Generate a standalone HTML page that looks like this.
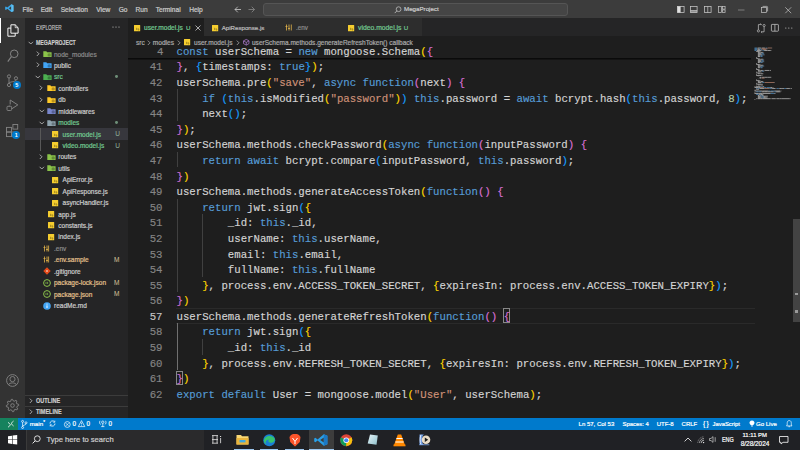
<!DOCTYPE html>
<html><head><meta charset="utf-8"><style>
*{box-sizing:border-box}
html,body{margin:0;padding:0}
body{width:800px;height:450px;overflow:hidden;position:relative;background:#1e1e1e;font-family:"Liberation Sans",sans-serif}
.a{position:absolute;white-space:nowrap}
.t{-webkit-text-stroke:0.2px currentColor}
.code{font-family:"Liberation Mono",monospace;font-size:10.69px;line-height:15.6px;color:#d4d4d4;white-space:pre;-webkit-text-stroke:0.15px currentColor}
.ln{font-family:"Liberation Mono",monospace;font-size:10.69px;line-height:15.6px;color:#858585;text-align:right;width:40px;white-space:pre;-webkit-text-stroke:0.15px currentColor}
.k{color:#569cd6}.s{color:#ce9178}.n{color:#b5cea8}
.b1{color:#ffd700}.b2{color:#da70d6}.b3{color:#179fff}
svg{position:absolute;overflow:visible}
</style></head><body>
<div class="a" style="left:0px;top:0px;width:800px;height:18px;background:#3c3c3c;"></div>
<div class="a" style="left:0px;top:18px;width:25px;height:400px;background:#333333;"></div>
<div class="a" style="left:25px;top:18px;width:102.5px;height:400px;background:#252526;"></div>
<div class="a" style="left:127.5px;top:18px;width:672.5px;height:18px;background:#252526;"></div>
<div class="a" style="left:0px;top:418px;width:800px;height:12px;background:#007acc;"></div>
<div class="a" style="left:0px;top:418px;width:18px;height:12px;background:#16825d;"></div>
<div class="a" style="left:0px;top:429.5px;width:800px;height:20.5px;background:#202125;"></div>
<svg style="left:4.8px;top:4.4px;" width="10" height="10" viewBox="0 0 10 10"><g transform="scale(0.88 0.84)"><path d="M7.2 0.4 L9.6 1.5 V8.5 L7.2 9.6 L2.6 5.8 L1 7 L0.2 6.5 V3.5 L1 3 L2.6 4.2 Z M7.2 2.8 L4.3 5 L7.2 7.2 Z" fill="#3aa7e8"/><path d="M7.2 0.4 L9.6 1.5 V8.5 L7.2 9.6 Z" fill="#5fc0f0"/></g></svg>
<div class="a t" style="left:22.5px;top:3.50px;height:12px;line-height:12px;font-size:6.6px;color:#cccccc;font-weight:normal;">File</div>
<div class="a t" style="left:40.7px;top:3.50px;height:12px;line-height:12px;font-size:6.6px;color:#cccccc;font-weight:normal;">Edit</div>
<div class="a t" style="left:60.7px;top:3.50px;height:12px;line-height:12px;font-size:6.6px;color:#cccccc;font-weight:normal;">Selection</div>
<div class="a t" style="left:96.2px;top:3.50px;height:12px;line-height:12px;font-size:6.6px;color:#cccccc;font-weight:normal;">View</div>
<div class="a t" style="left:118.7px;top:3.50px;height:12px;line-height:12px;font-size:6.6px;color:#cccccc;font-weight:normal;">Go</div>
<div class="a t" style="left:135.5px;top:3.50px;height:12px;line-height:12px;font-size:6.6px;color:#cccccc;font-weight:normal;">Run</div>
<div class="a t" style="left:155.7px;top:3.50px;height:12px;line-height:12px;font-size:6.6px;color:#cccccc;font-weight:normal;">Terminal</div>
<div class="a t" style="left:189.2px;top:3.50px;height:12px;line-height:12px;font-size:6.6px;color:#cccccc;font-weight:normal;">Help</div>
<svg style="left:234px;top:6px;" width="8" height="7" viewBox="0 0 8 7"><path d="M7 3.5 H1 M3.8 0.7 L1 3.5 L3.8 6.3" stroke="#cccccc" stroke-width="0.8" fill="none"/></svg>
<svg style="left:248px;top:6px;" width="8" height="7" viewBox="0 0 8 7"><path d="M0.5 3.5 H6.5 M3.7 0.7 L6.5 3.5 L3.7 6.3" stroke="#8a8a8a" stroke-width="0.8" fill="none"/></svg>
<div class="a" style="left:262.5px;top:3px;width:305px;height:12.5px;background:#454545;border-radius:3px;border:0.5px solid #555555"></div>
<svg style="left:394px;top:5.5px;" width="8" height="8" viewBox="0 0 8 8"><circle cx="4.6" cy="3.2" r="2.4" stroke="#bbbbbb" stroke-width="0.8" fill="none"/><path d="M2.9 4.9 L0.7 7.1" stroke="#bbbbbb" stroke-width="0.9"/></svg>
<div class="a t" style="left:404px;top:3.30px;height:12px;line-height:12px;font-size:6.2px;color:#cccccc;font-weight:normal;">MegaProject</div>
<svg style="left:677.3px;top:6.2px;" width="7.5" height="7" viewBox="0 0 7.5 7"><rect x="0.4" y="0.4" width="6.7" height="6.2" stroke="#c8c8c8" stroke-width="0.75" fill="none"/><rect x="0.4" y="0.4" width="3.2" height="6.2" fill="#e0e0e0"/></svg>
<svg style="left:690.3px;top:6.2px;" width="7.5" height="7" viewBox="0 0 7.5 7"><rect x="0.4" y="0.4" width="6.7" height="6.2" stroke="#c8c8c8" stroke-width="0.75" fill="none"/><rect x="0.4" y="4.5" width="6.7" height="2.1" fill="#c8c8c8" opacity="0.6"/><path d="M0.4 4.5 H7.1" stroke="#c8c8c8" stroke-width="0.7"/></svg>
<svg style="left:704px;top:6.2px;" width="7.5" height="7" viewBox="0 0 7.5 7"><rect x="0.4" y="0.4" width="6.7" height="6.2" stroke="#c8c8c8" stroke-width="0.75" fill="none"/><path d="M3.75 0.4 V6.6" stroke="#c8c8c8" stroke-width="0.7"/></svg>
<svg style="left:718px;top:6.2px;" width="7.5" height="7" viewBox="0 0 7.5 7"><rect x="0.4" y="0.4" width="3" height="6.2" stroke="#c8c8c8" stroke-width="0.7" fill="none"/><rect x="4.4" y="0.4" width="2.7" height="2.7" stroke="#c8c8c8" stroke-width="0.7" fill="none"/><rect x="4.4" y="3.9" width="2.7" height="2.7" stroke="#c8c8c8" stroke-width="0.7" fill="none"/></svg>
<svg style="left:737.5px;top:8.5px;" width="7" height="2" viewBox="0 0 7 2"><path d="M0 1 H6.5" stroke="#9a9a9a" stroke-width="0.7"/></svg>
<svg style="left:761px;top:6.3px;" width="7" height="7" viewBox="0 0 7 7"><rect x="0.4" y="1.4" width="5.2" height="5.2" stroke="#c8c8c8" stroke-width="0.7" fill="none"/><path d="M1.6 0.4 H5.8 Q6.6 0.4 6.6 1.2 V5.4" stroke="#c8c8c8" stroke-width="0.7" fill="none"/></svg>
<svg style="left:785px;top:6.5px;" width="6.5" height="6.5" viewBox="0 0 6.5 6.5"><path d="M0.3 0.3 L6.2 6.2 M6.2 0.3 L0.3 6.2" stroke="#c8c8c8" stroke-width="0.7"/></svg>
<div class="a" style="left:0px;top:18px;width:1.3px;height:25.3px;background:#ffffff;"></div>
<svg style="left:6.5px;top:24px;" width="12" height="13" viewBox="0 0 12 13"><path d="M3.9 0.8 H8.2 L11.1 3.7 V9.2 H3.9 Z" stroke="#ffffff" stroke-width="0.95" fill="none" stroke-linejoin="round"/><path d="M8.2 0.8 V3.7 H11.1" stroke="#ffffff" stroke-width="0.7" fill="none"/><path d="M3.9 4.1 H0.9 V12.2 H8.2 V9.2" stroke="#ffffff" stroke-width="0.95" fill="none" stroke-linejoin="round"/></svg>
<svg style="left:6.5px;top:49px;" width="12" height="14" viewBox="0 0 12 14"><circle cx="7.2" cy="4.8" r="3.8" stroke="#858585" stroke-width="1" fill="none"/><path d="M4.4 7.6 L0.8 12.6" stroke="#858585" stroke-width="1.1"/></svg>
<svg style="left:6px;top:74px;" width="14" height="14" viewBox="0 0 14 14"><circle cx="3" cy="2.4" r="1.6" stroke="#858585" stroke-width="0.9" fill="none"/><circle cx="3" cy="11" r="1.6" stroke="#858585" stroke-width="0.9" fill="none"/><circle cx="10" cy="4.3" r="1.6" stroke="#858585" stroke-width="0.9" fill="none"/><path d="M3 4 V9.4 M10 5.9 C10 8 3 7.5 3 9.4" stroke="#858585" stroke-width="0.9" fill="none"/></svg>
<div class="a" style="left:12.7px;top:80.6px;width:8.4px;height:8.4px;border-radius:50%;background:#007acc;color:#fff;font-size:5.5px;line-height:8px;text-align:center;font-weight:bold">5</div>
<svg style="left:6px;top:99px;" width="13" height="13" viewBox="0 0 13 13"><path d="M4.2 5.5 V1 L11.8 5.9 L5.8 9.8" stroke="#858585" stroke-width="0.95" fill="none" stroke-linejoin="round"/><rect x="1" y="7.3" width="4.6" height="4.2" rx="0.9" stroke="#858585" stroke-width="0.9" fill="#333333"/><path d="M3.3 6.5 V7.3" stroke="#858585" stroke-width="0.8"/></svg>
<svg style="left:6px;top:123.5px;" width="13" height="13.5" viewBox="0 0 13 13.5"><rect x="0.5" y="3.4" width="5" height="4.6" stroke="#858585" stroke-width="0.9" fill="none"/><rect x="0.5" y="8" width="5" height="4.6" stroke="#858585" stroke-width="0.9" fill="none"/><rect x="6.9" y="0.5" width="4.8" height="4.6" stroke="#858585" stroke-width="0.9" fill="none"/><rect x="5.5" y="8" width="4.6" height="4.6" stroke="#858585" stroke-width="0.9" fill="none"/></svg>
<div class="a" style="left:12.2px;top:130.6px;width:8px;height:8px;border-radius:50%;background:#007acc;color:#fff;font-size:5.5px;line-height:8px;text-align:center;font-weight:bold">1</div>
<svg style="left:6px;top:374px;" width="13" height="13" viewBox="0 0 13 13"><circle cx="6.5" cy="6.5" r="5.9" stroke="#858585" stroke-width="0.9" fill="none"/><circle cx="6.5" cy="5.1" r="2.6" stroke="#858585" stroke-width="0.9" fill="none"/><path d="M2.6 10.8 C3 8.3 10 8.3 10.4 10.8" stroke="#858585" stroke-width="0.9" fill="none"/></svg>
<svg style="left:6px;top:399px;" width="13" height="13" viewBox="0 0 13 13"><path d="M12.58 5.27 L12.70 6.48 L11.01 7.38 L10.76 8.24 L11.67 9.93 L10.90 10.87 L9.07 10.32 L8.28 10.74 L7.73 12.58 L6.52 12.70 L5.62 11.01 L4.76 10.76 L3.07 11.67 L2.13 10.90 L2.68 9.07 L2.26 8.28 L0.42 7.73 L0.30 6.52 L1.99 5.62 L2.24 4.76 L1.33 3.07 L2.10 2.13 L3.93 2.68 L4.72 2.26 L5.27 0.42 L6.48 0.30 L7.38 1.99 L8.24 2.24 L9.93 1.33 L10.87 2.10 L10.32 3.93 L10.74 4.72 Z" stroke="#858585" stroke-width="0.9" fill="none" stroke-linejoin="round"/><circle cx="6.5" cy="6.5" r="1.8" stroke="#858585" stroke-width="0.9" fill="none"/></svg>
<div class="a t" style="left:36px;top:21.80px;height:12px;line-height:12px;font-size:6.3px;color:#bbbbbb;font-weight:normal;transform:scaleX(0.75);transform-origin:0 50%">EXPLORER</div>
<svg style="left:111.5px;top:26.3px;" width="9" height="2" viewBox="0 0 9 2"><circle cx="1" cy="1" r="0.6" fill="#cccccc"/><circle cx="4" cy="1" r="0.6" fill="#cccccc"/><circle cx="7" cy="1" r="0.6" fill="#cccccc"/></svg>
<div class="a" style="left:25px;top:128.24px;width:102.5px;height:11.5px;background:#37373d;"></div>
<svg style="left:27.5px;top:40.5px;" width="6" height="4" viewBox="0 0 6 4"><path d="M0.6 0.8 L2.8 3 L5 0.8" stroke="#c5c5c5" stroke-width="0.8" fill="none"/></svg>
<div class="a t" style="left:36px;top:36.70px;height:12px;line-height:12px;font-size:6.7px;color:#cccccc;font-weight:bold;transform:scaleX(0.77);transform-origin:0 50%">MEGAPROJECT</div>
<svg style="left:35.7px;top:50.93px;" width="4" height="6" viewBox="0 0 4 6"><path d="M0.8 0.6 L3 2.8 L0.8 5" stroke="#c5c5c5" stroke-width="0.8" fill="none"/></svg>
<svg style="left:43.0px;top:50.93px;" width="9" height="6.5" viewBox="0 0 9 6.5"><path d="M0.3 0.3 H3.3 L4.2 1.2 H8.4 Q8.6 1.2 8.6 1.5 V5.9 H0.3 Z" fill="#8bc34a"/><circle cx="6.2" cy="3.9" r="1.7" fill="rgba(0,0,0,0.28)"/></svg>
<div class="a t" style="left:54.0px;top:48.53px;height:12px;line-height:12px;font-size:6.5px;color:#8b8b8b;font-weight:normal;">node_modules</div>
<svg style="left:35.7px;top:62.36px;" width="4" height="6" viewBox="0 0 4 6"><path d="M0.8 0.6 L3 2.8 L0.8 5" stroke="#c5c5c5" stroke-width="0.8" fill="none"/></svg>
<svg style="left:43.0px;top:62.36px;" width="9" height="6.5" viewBox="0 0 9 6.5"><path d="M0.3 0.3 H3.3 L4.2 1.2 H8.4 Q8.6 1.2 8.6 1.5 V5.9 H0.3 Z" fill="#42a5f5"/><circle cx="6.2" cy="3.9" r="1.7" fill="rgba(0,0,0,0.28)"/></svg>
<div class="a t" style="left:54.0px;top:59.96px;height:12px;line-height:12px;font-size:6.5px;color:#cccccc;font-weight:normal;">public</div>
<svg style="left:35.1px;top:74.78999999999999px;" width="6" height="4" viewBox="0 0 6 4"><path d="M0.6 0.8 L2.8 3 L5 0.8" stroke="#c5c5c5" stroke-width="0.8" fill="none"/></svg>
<svg style="left:43.0px;top:73.78999999999999px;" width="9" height="6.5" viewBox="0 0 9 6.5"><path d="M0.3 0.3 H3.3 L4.2 1.2 H8.4 Q8.6 1.2 8.6 1.5 V5.9 H0.3 Z" fill="#4caf50"/><circle cx="6.2" cy="3.9" r="1.7" fill="rgba(0,0,0,0.28)"/></svg>
<div class="a t" style="left:54.0px;top:71.39px;height:12px;line-height:12px;font-size:6.5px;color:#73c991;font-weight:normal;">src</div>
<div class="a" style="left:115px;top:75.49px;width:2.8px;height:2.8px;border-radius:50%;background:#6e8f78"></div>
<svg style="left:39.1px;top:85.22px;" width="4" height="6" viewBox="0 0 4 6"><path d="M0.8 0.6 L3 2.8 L0.8 5" stroke="#c5c5c5" stroke-width="0.8" fill="none"/></svg>
<svg style="left:47.3px;top:85.22px;" width="9" height="6.5" viewBox="0 0 9 6.5"><path d="M0.3 0.3 H3.3 L4.2 1.2 H8.4 Q8.6 1.2 8.6 1.5 V5.9 H0.3 Z" fill="#ffca28"/><circle cx="6.2" cy="3.9" r="1.7" fill="rgba(0,0,0,0.28)"/></svg>
<div class="a t" style="left:58.3px;top:82.82px;height:12px;line-height:12px;font-size:6.5px;color:#cccccc;font-weight:normal;">controllers</div>
<svg style="left:39.1px;top:96.65px;" width="4" height="6" viewBox="0 0 4 6"><path d="M0.8 0.6 L3 2.8 L0.8 5" stroke="#c5c5c5" stroke-width="0.8" fill="none"/></svg>
<svg style="left:47.3px;top:96.65px;" width="9" height="6.5" viewBox="0 0 9 6.5"><path d="M0.3 0.3 H3.3 L4.2 1.2 H8.4 Q8.6 1.2 8.6 1.5 V5.9 H0.3 Z" fill="#ffca28"/><circle cx="6.2" cy="3.9" r="1.7" fill="rgba(0,0,0,0.28)"/></svg>
<div class="a t" style="left:58.3px;top:94.25px;height:12px;line-height:12px;font-size:6.5px;color:#cccccc;font-weight:normal;">db</div>
<svg style="left:38.5px;top:109.08px;" width="6" height="4" viewBox="0 0 6 4"><path d="M0.6 0.8 L2.8 3 L5 0.8" stroke="#c5c5c5" stroke-width="0.8" fill="none"/></svg>
<svg style="left:47.3px;top:108.08px;" width="9" height="6.5" viewBox="0 0 9 6.5"><path d="M0.3 0.3 H3.3 L4.2 1.2 H8.4 Q8.6 1.2 8.6 1.5 V5.9 H0.3 Z" fill="#7986cb"/><circle cx="6.2" cy="3.9" r="1.7" fill="rgba(0,0,0,0.28)"/></svg>
<div class="a t" style="left:58.3px;top:105.68px;height:12px;line-height:12px;font-size:6.5px;color:#cccccc;font-weight:normal;">middlewares</div>
<svg style="left:38.5px;top:120.50999999999999px;" width="6" height="4" viewBox="0 0 6 4"><path d="M0.6 0.8 L2.8 3 L5 0.8" stroke="#c5c5c5" stroke-width="0.8" fill="none"/></svg>
<svg style="left:47.3px;top:119.50999999999999px;" width="9" height="6.5" viewBox="0 0 9 6.5"><path d="M0.3 0.3 H3.3 L4.2 1.2 H8.4 Q8.6 1.2 8.6 1.5 V5.9 H0.3 Z" fill="#90a4ae"/><circle cx="6.2" cy="3.9" r="1.7" fill="rgba(0,0,0,0.28)"/></svg>
<div class="a t" style="left:58.3px;top:117.11px;height:12px;line-height:12px;font-size:6.5px;color:#73c991;font-weight:normal;">modles</div>
<div class="a" style="left:115px;top:121.21px;width:2.8px;height:2.8px;border-radius:50%;background:#6e8f78"></div>
<svg style="left:52.4px;top:130.94px;" width="6.2" height="6.2" viewBox="0 0 6.2 6.2"><rect x="0" y="0" width="6.2" height="6.2" fill="#f5cd2f" rx="0.3"/><path d="M2.6 2.8 V5 M3.6 4.6 C4.3 5.3 5.3 5 5 4.3 C4.7 3.8 3.7 3.9 3.8 3.3" stroke="#5a4a10" stroke-width="0.5" fill="none"/></svg>
<div class="a t" style="left:62.6px;top:128.54px;height:12px;line-height:12px;font-size:6.5px;color:#73c991;font-weight:normal;">user.model.js</div>
<div class="a t" style="left:115.2px;top:128.44px;height:12px;line-height:12px;font-size:6.5px;color:#94b89e;font-weight:normal;-webkit-text-stroke:0">U</div>
<svg style="left:52.4px;top:142.37px;" width="6.2" height="6.2" viewBox="0 0 6.2 6.2"><rect x="0" y="0" width="6.2" height="6.2" fill="#f5cd2f" rx="0.3"/><path d="M2.6 2.8 V5 M3.6 4.6 C4.3 5.3 5.3 5 5 4.3 C4.7 3.8 3.7 3.9 3.8 3.3" stroke="#5a4a10" stroke-width="0.5" fill="none"/></svg>
<div class="a t" style="left:62.6px;top:139.97px;height:12px;line-height:12px;font-size:6.5px;color:#73c991;font-weight:normal;">video.model.js</div>
<div class="a t" style="left:115.2px;top:139.87px;height:12px;line-height:12px;font-size:6.5px;color:#94b89e;font-weight:normal;-webkit-text-stroke:0">U</div>
<svg style="left:39.1px;top:153.8px;" width="4" height="6" viewBox="0 0 4 6"><path d="M0.8 0.6 L3 2.8 L0.8 5" stroke="#c5c5c5" stroke-width="0.8" fill="none"/></svg>
<svg style="left:47.3px;top:153.8px;" width="9" height="6.5" viewBox="0 0 9 6.5"><path d="M0.3 0.3 H3.3 L4.2 1.2 H8.4 Q8.6 1.2 8.6 1.5 V5.9 H0.3 Z" fill="#8bc34a"/><circle cx="6.2" cy="3.9" r="1.7" fill="rgba(0,0,0,0.28)"/></svg>
<div class="a t" style="left:58.3px;top:151.40px;height:12px;line-height:12px;font-size:6.5px;color:#cccccc;font-weight:normal;">routes</div>
<svg style="left:38.5px;top:166.23px;" width="6" height="4" viewBox="0 0 6 4"><path d="M0.6 0.8 L2.8 3 L5 0.8" stroke="#c5c5c5" stroke-width="0.8" fill="none"/></svg>
<svg style="left:47.3px;top:165.23px;" width="9" height="6.5" viewBox="0 0 9 6.5"><path d="M0.3 0.3 H3.3 L4.2 1.2 H8.4 Q8.6 1.2 8.6 1.5 V5.9 H0.3 Z" fill="#8bc34a"/><circle cx="6.2" cy="3.9" r="1.7" fill="rgba(0,0,0,0.28)"/></svg>
<div class="a t" style="left:58.3px;top:162.83px;height:12px;line-height:12px;font-size:6.5px;color:#cccccc;font-weight:normal;">utils</div>
<svg style="left:52.4px;top:176.66px;" width="6.2" height="6.2" viewBox="0 0 6.2 6.2"><rect x="0" y="0" width="6.2" height="6.2" fill="#f5cd2f" rx="0.3"/><path d="M2.6 2.8 V5 M3.6 4.6 C4.3 5.3 5.3 5 5 4.3 C4.7 3.8 3.7 3.9 3.8 3.3" stroke="#5a4a10" stroke-width="0.5" fill="none"/></svg>
<div class="a t" style="left:62.6px;top:174.26px;height:12px;line-height:12px;font-size:6.5px;color:#cccccc;font-weight:normal;">ApiError.js</div>
<svg style="left:52.4px;top:188.09px;" width="6.2" height="6.2" viewBox="0 0 6.2 6.2"><rect x="0" y="0" width="6.2" height="6.2" fill="#f5cd2f" rx="0.3"/><path d="M2.6 2.8 V5 M3.6 4.6 C4.3 5.3 5.3 5 5 4.3 C4.7 3.8 3.7 3.9 3.8 3.3" stroke="#5a4a10" stroke-width="0.5" fill="none"/></svg>
<div class="a t" style="left:62.6px;top:185.69px;height:12px;line-height:12px;font-size:6.5px;color:#cccccc;font-weight:normal;">ApiResponse.js</div>
<svg style="left:52.4px;top:199.51999999999998px;" width="6.2" height="6.2" viewBox="0 0 6.2 6.2"><rect x="0" y="0" width="6.2" height="6.2" fill="#f5cd2f" rx="0.3"/><path d="M2.6 2.8 V5 M3.6 4.6 C4.3 5.3 5.3 5 5 4.3 C4.7 3.8 3.7 3.9 3.8 3.3" stroke="#5a4a10" stroke-width="0.5" fill="none"/></svg>
<div class="a t" style="left:62.6px;top:197.12px;height:12px;line-height:12px;font-size:6.5px;color:#cccccc;font-weight:normal;">asyncHandler.js</div>
<svg style="left:48.099999999999994px;top:210.95px;" width="6.2" height="6.2" viewBox="0 0 6.2 6.2"><rect x="0" y="0" width="6.2" height="6.2" fill="#f5cd2f" rx="0.3"/><path d="M2.6 2.8 V5 M3.6 4.6 C4.3 5.3 5.3 5 5 4.3 C4.7 3.8 3.7 3.9 3.8 3.3" stroke="#5a4a10" stroke-width="0.5" fill="none"/></svg>
<div class="a t" style="left:58.3px;top:208.55px;height:12px;line-height:12px;font-size:6.5px;color:#cccccc;font-weight:normal;">app.js</div>
<svg style="left:48.099999999999994px;top:222.38px;" width="6.2" height="6.2" viewBox="0 0 6.2 6.2"><rect x="0" y="0" width="6.2" height="6.2" fill="#f5cd2f" rx="0.3"/><path d="M2.6 2.8 V5 M3.6 4.6 C4.3 5.3 5.3 5 5 4.3 C4.7 3.8 3.7 3.9 3.8 3.3" stroke="#5a4a10" stroke-width="0.5" fill="none"/></svg>
<div class="a t" style="left:58.3px;top:219.98px;height:12px;line-height:12px;font-size:6.5px;color:#cccccc;font-weight:normal;">constants.js</div>
<svg style="left:48.099999999999994px;top:233.81px;" width="6.2" height="6.2" viewBox="0 0 6.2 6.2"><rect x="0" y="0" width="6.2" height="6.2" fill="#f5cd2f" rx="0.3"/><path d="M2.6 2.8 V5 M3.6 4.6 C4.3 5.3 5.3 5 5 4.3 C4.7 3.8 3.7 3.9 3.8 3.3" stroke="#5a4a10" stroke-width="0.5" fill="none"/></svg>
<div class="a t" style="left:58.3px;top:231.41px;height:12px;line-height:12px;font-size:6.5px;color:#cccccc;font-weight:normal;">index.js</div>
<svg style="left:43.0px;top:244.74px;" width="7" height="7" viewBox="0 0 7 7"><path d="M1.5 0.5 V6.5 M4 0.5 V6.5 M0.5 2.5 H2.5 M3 4.5 H5 M5.6 0.5 V6.5" stroke="#e2b44a" stroke-width="0.8"/></svg>
<div class="a t" style="left:54.0px;top:242.84px;height:12px;line-height:12px;font-size:6.5px;color:#8b8b8b;font-weight:normal;">.env</div>
<svg style="left:43.0px;top:256.16999999999996px;" width="7" height="7" viewBox="0 0 7 7"><path d="M1.5 0.5 V6.5 M4 0.5 V6.5 M0.5 2.5 H2.5 M3 4.5 H5 M5.6 0.5 V6.5" stroke="#e2b44a" stroke-width="0.8"/></svg>
<div class="a t" style="left:54.0px;top:254.27px;height:12px;line-height:12px;font-size:6.5px;color:#e2c08d;font-weight:normal;">.env.sample</div>
<div class="a t" style="left:113.9px;top:254.17px;height:12px;line-height:12px;font-size:6.5px;color:#d8c39a;font-weight:normal;-webkit-text-stroke:0">M</div>
<svg style="left:43.0px;top:267.3px;" width="8" height="8" viewBox="0 0 8 8"><rect x="1.4" y="1.4" width="5.2" height="5.2" transform="rotate(45 4 4)" fill="#e64a19"/><circle cx="4" cy="4" r="0.8" fill="#fff"/></svg>
<div class="a t" style="left:54.0px;top:265.70px;height:12px;line-height:12px;font-size:6.5px;color:#cccccc;font-weight:normal;">.gitignore</div>
<svg style="left:43.0px;top:278.72999999999996px;" width="8" height="8" viewBox="0 0 8 8"><circle cx="4" cy="4" r="3.4" stroke="#8bc34a" stroke-width="1" fill="none"/><path d="M3 2.8 V5 M4.6 2.8 V5" stroke="#8bc34a" stroke-width="0.7"/></svg>
<div class="a t" style="left:54.0px;top:277.13px;height:12px;line-height:12px;font-size:6.5px;color:#e2c08d;font-weight:normal;">package-lock.json</div>
<div class="a t" style="left:113.9px;top:277.03px;height:12px;line-height:12px;font-size:6.5px;color:#d8c39a;font-weight:normal;-webkit-text-stroke:0">M</div>
<svg style="left:43.0px;top:290.15999999999997px;" width="8" height="8" viewBox="0 0 8 8"><circle cx="4" cy="4" r="3.4" stroke="#8bc34a" stroke-width="1" fill="none"/><path d="M3 2.8 V5 M4.6 2.8 V5" stroke="#8bc34a" stroke-width="0.7"/></svg>
<div class="a t" style="left:54.0px;top:288.56px;height:12px;line-height:12px;font-size:6.5px;color:#e2c08d;font-weight:normal;">package.json</div>
<div class="a t" style="left:113.9px;top:288.46px;height:12px;line-height:12px;font-size:6.5px;color:#d8c39a;font-weight:normal;-webkit-text-stroke:0">M</div>
<svg style="left:43.0px;top:301.59px;" width="8" height="8" viewBox="0 0 8 8"><circle cx="4" cy="4" r="3.8" fill="#42a5f5"/><path d="M4 3.4 V6" stroke="#fff" stroke-width="1"/><circle cx="4" cy="2.1" r="0.55" fill="#fff"/></svg>
<div class="a t" style="left:54.0px;top:299.99px;height:12px;line-height:12px;font-size:6.5px;color:#cccccc;font-weight:normal;">readMe.md</div>
<div class="a" style="left:40px;top:128.24px;width:0.7px;height:23px;background:#585858;"></div>
<div class="a" style="left:25px;top:395px;width:102.5px;height:0.6px;background:#3c3c3c;"></div>
<div class="a" style="left:25px;top:406.3px;width:102.5px;height:0.6px;background:#3c3c3c;"></div>
<svg style="left:29px;top:398px;" width="4" height="6" viewBox="0 0 4 6"><path d="M0.8 0.6 L3 2.8 L0.8 5" stroke="#c5c5c5" stroke-width="0.8" fill="none"/></svg>
<div class="a t" style="left:35.7px;top:395.00px;height:12px;line-height:12px;font-size:6.3px;color:#cccccc;font-weight:bold;transform:scaleX(0.87);transform-origin:0 50%">OUTLINE</div>
<svg style="left:29px;top:409px;" width="4" height="6" viewBox="0 0 4 6"><path d="M0.8 0.6 L3 2.8 L0.8 5" stroke="#c5c5c5" stroke-width="0.8" fill="none"/></svg>
<div class="a t" style="left:35.7px;top:406.00px;height:12px;line-height:12px;font-size:6.3px;color:#cccccc;font-weight:bold;transform:scaleX(0.87);transform-origin:0 50%">TIMELINE</div>
<div class="a" style="left:127.5px;top:18px;width:76.8px;height:18px;background:#1e1e1e;"></div>
<div class="a" style="left:204.3px;top:18px;width:74px;height:18px;background:#2d2d2d;"></div>
<div class="a" style="left:278.3px;top:18px;width:63px;height:18px;background:#2d2d2d;"></div>
<div class="a" style="left:341.3px;top:18px;width:80.7px;height:18px;background:#2d2d2d;"></div>
<svg style="left:134px;top:24.5px;" width="6.2" height="6.2" viewBox="0 0 6.2 6.2"><rect x="0" y="0" width="6.2" height="6.2" fill="#f5cd2f" rx="0.3"/><path d="M2.6 2.8 V5 M3.6 4.6 C4.3 5.3 5.3 5 5 4.3 C4.7 3.8 3.7 3.9 3.8 3.3" stroke="#5a4a10" stroke-width="0.5" fill="none"/></svg>
<div class="a t" style="left:144px;top:21.80px;height:12px;line-height:12px;font-size:6.6px;color:#73c991;font-weight:normal;">user.model.js</div>
<div class="a t" style="left:186px;top:21.80px;height:12px;line-height:12px;font-size:6.2px;color:#73c991;font-weight:normal;">U</div>
<svg style="left:194.5px;top:24.5px;" width="6" height="6" viewBox="0 0 6 6"><path d="M0.5 0.5 L5.5 5.5 M5.5 0.5 L0.5 5.5" stroke="#cccccc" stroke-width="0.8"/></svg>
<svg style="left:211.5px;top:24.5px;" width="6.2" height="6.2" viewBox="0 0 6.2 6.2"><rect x="0" y="0" width="6.2" height="6.2" fill="#f5cd2f" rx="0.3"/><path d="M2.6 2.8 V5 M3.6 4.6 C4.3 5.3 5.3 5 5 4.3 C4.7 3.8 3.7 3.9 3.8 3.3" stroke="#5a4a10" stroke-width="0.5" fill="none"/></svg>
<div class="a t" style="left:221.7px;top:21.80px;height:12px;line-height:12px;font-size:6.15px;color:#bdbdbd;font-weight:normal;">ApiResponse.js</div>
<svg style="left:284.5px;top:24px;" width="8" height="7" viewBox="0 0 8 7"><path d="M1.5 0.5 V6.5 M4 0.5 V6.5 M0.5 2.5 H2.5 M3 4.5 H5 M6.3 0.5 V6.5" stroke="#e2b44a" stroke-width="0.8"/></svg>
<div class="a t" style="left:296px;top:21.80px;height:12px;line-height:12px;font-size:6.3px;color:#8b8b8b;font-weight:normal;">.env</div>
<svg style="left:348px;top:24.5px;" width="6.2" height="6.2" viewBox="0 0 6.2 6.2"><rect x="0" y="0" width="6.2" height="6.2" fill="#f5cd2f" rx="0.3"/><path d="M2.6 2.8 V5 M3.6 4.6 C4.3 5.3 5.3 5 5 4.3 C4.7 3.8 3.7 3.9 3.8 3.3" stroke="#5a4a10" stroke-width="0.5" fill="none"/></svg>
<div class="a t" style="left:358px;top:21.80px;height:12px;line-height:12px;font-size:6.8px;color:#73c991;font-weight:normal;">video.model.js</div>
<div class="a t" style="left:403.7px;top:21.80px;height:12px;line-height:12px;font-size:6.2px;color:#73c991;font-weight:normal;">U</div>
<svg style="left:757px;top:23.6px;" width="8.5" height="8.5" viewBox="0 0 8.5 8.5"><path d="M1.4 0.6 V5.8 M7.1 2.6 V7.8 M1.4 0.6 H4.5 M4.5 0.6 L3.3 -0.4 M7.1 7.8 H4 M4 7.8 L5.2 8.8" stroke="#c8c8c8" stroke-width="0.7" fill="none"/><circle cx="1.4" cy="6.9" r="1.1" stroke="#c8c8c8" stroke-width="0.65" fill="none"/><circle cx="7.1" cy="1.5" r="1.1" stroke="#c8c8c8" stroke-width="0.65" fill="none"/></svg>
<svg style="left:771px;top:23.6px;" width="7.8" height="7.6" viewBox="0 0 7.8 7.6"><rect x="0.4" y="0.4" width="7" height="6.8" rx="0.6" stroke="#c8c8c8" stroke-width="0.75" fill="none"/><path d="M3.9 0.4 V7.2" stroke="#c8c8c8" stroke-width="0.75"/></svg>
<svg style="left:784.5px;top:26.6px;" width="8" height="2" viewBox="0 0 8 2"><circle cx="0.8" cy="1" r="0.6" fill="#c8c8c8"/><circle cx="3.8" cy="1" r="0.6" fill="#c8c8c8"/><circle cx="6.8" cy="1" r="0.6" fill="#c8c8c8"/></svg>
<div class="a t" style="left:136px;top:36.60px;height:12px;line-height:12px;font-size:6.5px;color:#a9a9a9;font-weight:normal;">src</div>
<svg style="left:147px;top:39.6px;" width="4" height="6" viewBox="0 0 4 6"><path d="M0.8 0.6 L3 2.8 L0.8 5" stroke="#a9a9a9" stroke-width="0.8" fill="none"/></svg>
<div class="a t" style="left:152.8px;top:36.60px;height:12px;line-height:12px;font-size:6.6px;color:#a9a9a9;font-weight:normal;">modles</div>
<svg style="left:177px;top:39.6px;" width="4" height="6" viewBox="0 0 4 6"><path d="M0.8 0.6 L3 2.8 L0.8 5" stroke="#a9a9a9" stroke-width="0.8" fill="none"/></svg>
<svg style="left:184px;top:39px;" width="6.2" height="6.2" viewBox="0 0 6.2 6.2"><rect x="0" y="0" width="6.2" height="6.2" fill="#f5cd2f" rx="0.3"/><path d="M2.6 2.8 V5 M3.6 4.6 C4.3 5.3 5.3 5 5 4.3 C4.7 3.8 3.7 3.9 3.8 3.3" stroke="#5a4a10" stroke-width="0.5" fill="none"/></svg>
<div class="a t" style="left:194px;top:36.60px;height:12px;line-height:12px;font-size:6.55px;color:#a9a9a9;font-weight:normal;">user.model.js</div>
<svg style="left:236px;top:39.6px;" width="4" height="6" viewBox="0 0 4 6"><path d="M0.8 0.6 L3 2.8 L0.8 5" stroke="#a9a9a9" stroke-width="0.8" fill="none"/></svg>
<svg style="left:243px;top:39.3px;" width="6.5" height="6.5" viewBox="0 0 6.5 6.5"><path d="M3.25 0.4 L6 1.9 V4.6 L3.25 6.1 L0.5 4.6 V1.9 Z M0.5 1.9 L3.25 3.4 L6 1.9 M3.25 3.4 V6.1" stroke="#b180d7" stroke-width="0.7" fill="none"/></svg>
<div class="a t" style="left:252px;top:36.60px;height:12px;line-height:12px;font-size:6.52px;color:#a9a9a9;font-weight:normal;">userSchema.methods.generateRefreshToken() callback</div>
<div class="a" style="left:176px;top:307.8px;width:579px;height:16.6px;background:transparent;border-top:0.8px solid #2a2a2a;border-bottom:0.8px solid #2a2a2a"></div>
<div class="a" style="left:176.5px;top:89.4px;width:0.8px;height:31.2px;background:#404040;"></div>
<div class="a" style="left:176.5px;top:151.8px;width:0.8px;height:15.6px;background:#404040;"></div>
<div class="a" style="left:176.5px;top:198.60000000000002px;width:0.8px;height:93.6px;background:#404040;"></div>
<div class="a" style="left:202.0px;top:214.2px;width:0.8px;height:62.4px;background:#404040;"></div>
<div class="a" style="left:176.5px;top:323.4px;width:0.8px;height:46.8px;background:#707070;"></div>
<div class="a" style="left:202.0px;top:339.0px;width:0.8px;height:15.6px;background:#404040;"></div>
<div class="a" style="left:176.0px;top:370.7px;width:7.413px;height:14.6px;background:transparent;border:0.7px solid #888888"></div>
<div class="a" style="left:503.063px;top:308.3px;width:7.413px;height:14.6px;background:transparent;border:0.7px solid #888888"></div>
<div class="a ln" style="left:122.5px;top:60.400000000000006px">41
42
43
44
45
46
47
48
49
50
51
52
53
54
55
56
<span style="color:#c6c6c6">57</span>
58
59
60
61
62</div>
<div class="a code" style="left:176.5px;top:60.400000000000006px"><span class="b2">}</span>, <span class="b3">{</span>timestamps: <span class="k">true</span><span class="b3">}</span><span class="b1">)</span>;
userSchema.pre<span class="b1">(</span><span class="s">"save"</span>, <span class="k">async</span> <span class="k">function</span><span class="b2">(</span>next<span class="b2">)</span> <span class="b2">{</span>
    <span class="k">if</span> <span class="b3">(</span><span class="k">this</span>.isModified<span class="b1">(</span><span class="s">"password"</span><span class="b1">)</span><span class="b3">)</span> <span class="k">this</span>.password = <span class="k">await</span> bcrypt.hash<span class="b3">(</span><span class="k">this</span>.password, <span class="n">8</span><span class="b3">)</span>;
    next<span class="b3">()</span>;
<span class="b2">}</span><span class="b1">)</span>;
userSchema.methods.checkPassword<span class="b1">(</span><span class="k">async</span> <span class="k">function</span><span class="b2">(</span>inputPassword<span class="b2">)</span> <span class="b2">{</span>
    <span class="k">return</span> <span class="k">await</span> bcrypt.compare<span class="b3">(</span>inputPassword, <span class="k">this</span>.password<span class="b3">)</span>;
<span class="b2">}</span><span class="b1">)</span>
userSchema.methods.generateAccessToken<span class="b1">(</span><span class="k">function</span><span class="b2">()</span> <span class="b2">{</span>
    <span class="k">return</span> jwt.sign<span class="b3">(</span><span class="b1">{</span>
        _id: <span class="k">this</span>._id,
        userName: <span class="k">this</span>.userName,
        email: <span class="k">this</span>.email,
        fullName: <span class="k">this</span>.fullName
    <span class="b1">}</span>, process.env.ACCESS_TOKEN_SECRET, <span class="b1">{</span>expiresIn: process.env.ACCESS_TOKEN_EXPIRY<span class="b1">}</span><span class="b3">)</span>;
<span class="b2">}</span><span class="b1">)</span>
userSchema.methods.generateRefreshToken<span class="b1">(</span><span class="k">function</span><span class="b2">()</span> <span class="b2">{</span>
    <span class="k">return</span> jwt.sign<span class="b3">(</span><span class="b1">{</span>
        _id: <span class="k">this</span>._id
    <span class="b1">}</span>, process.env.REFRESH_TOKEN_SECRET, <span class="b1">{</span>expiresIn: process.env.REFRESH_TOKEN_EXPIRY<span class="b1">}</span><span class="b3">)</span>;
<span class="b2">}</span><span class="b1">)</span>
<span class="k">export</span> <span class="k">default</span> User = mongoose.model<span class="b1">(</span><span class="s">"User"</span>, userSchema<span class="b1">)</span>;</div>
<div class="a ln" style="left:123.5px;top:45.1px">4</div>
<div class="a code" style="left:176.5px;top:45.1px"><span class="k">const</span> userSchema = <span class="k">new</span> mongoose.Schema<span class="b1">(</span><span class="b2">{</span></div>
<div class="a" style="left:127.5px;top:57.5px;width:623px;height:1.2px;background:#0a0a0a;"></div>
<div class="a" style="left:127.5px;top:58.7px;width:623px;height:1.2px;background:rgba(0,0,0,0.35);"></div>
<svg style="left:0;top:0" width="800" height="450"><rect x="754.50" y="47.60" width="2.52" height="0.8" fill="#569cd6" opacity="0.8"/><rect x="757.44" y="47.60" width="3.36" height="0.8" fill="#d4d4d4" opacity="0.8"/><rect x="760.80" y="47.60" width="0.42" height="0.8" fill="#c0c0c0" opacity="0.8"/><rect x="761.64" y="47.60" width="0.42" height="0.8" fill="#c0c0c0" opacity="0.8"/><rect x="762.06" y="47.60" width="2.52" height="0.8" fill="#d4d4d4" opacity="0.8"/><rect x="764.58" y="47.60" width="0.42" height="0.8" fill="#c0c0c0" opacity="0.8"/><rect x="765.42" y="47.60" width="1.68" height="0.8" fill="#569cd6" opacity="0.8"/><rect x="767.52" y="47.60" width="4.20" height="0.8" fill="#ce9178" opacity="0.8"/><rect x="771.72" y="47.60" width="0.42" height="0.8" fill="#c0c0c0" opacity="0.8"/><rect x="754.50" y="48.46" width="2.52" height="0.8" fill="#569cd6" opacity="0.8"/><rect x="757.44" y="48.46" width="1.26" height="0.8" fill="#d4d4d4" opacity="0.8"/><rect x="759.12" y="48.46" width="1.68" height="0.8" fill="#569cd6" opacity="0.8"/><rect x="761.22" y="48.46" width="5.88" height="0.8" fill="#ce9178" opacity="0.8"/><rect x="767.10" y="48.46" width="0.42" height="0.8" fill="#c0c0c0" opacity="0.8"/><rect x="754.50" y="49.32" width="2.52" height="0.8" fill="#569cd6" opacity="0.8"/><rect x="757.44" y="49.32" width="2.52" height="0.8" fill="#d4d4d4" opacity="0.8"/><rect x="760.38" y="49.32" width="1.68" height="0.8" fill="#569cd6" opacity="0.8"/><rect x="762.48" y="49.32" width="3.36" height="0.8" fill="#ce9178" opacity="0.8"/><rect x="765.84" y="49.32" width="0.42" height="0.8" fill="#c0c0c0" opacity="0.8"/><rect x="754.50" y="50.18" width="2.10" height="0.8" fill="#569cd6" opacity="0.8"/><rect x="757.02" y="50.18" width="4.20" height="0.8" fill="#d4d4d4" opacity="0.8"/><rect x="761.64" y="50.18" width="0.42" height="0.8" fill="#c0c0c0" opacity="0.8"/><rect x="762.48" y="50.18" width="1.26" height="0.8" fill="#569cd6" opacity="0.8"/><rect x="764.16" y="50.18" width="3.36" height="0.8" fill="#d4d4d4" opacity="0.8"/><rect x="767.52" y="50.18" width="0.42" height="0.8" fill="#c0c0c0" opacity="0.8"/><rect x="767.94" y="50.18" width="2.52" height="0.8" fill="#d4d4d4" opacity="0.8"/><rect x="770.46" y="50.18" width="0.84" height="0.8" fill="#c0c0c0" opacity="0.8"/><rect x="756.18" y="51.04" width="3.36" height="0.8" fill="#d4d4d4" opacity="0.8"/><rect x="759.54" y="51.04" width="0.42" height="0.8" fill="#c0c0c0" opacity="0.8"/><rect x="760.38" y="51.04" width="0.42" height="0.8" fill="#c0c0c0" opacity="0.8"/><rect x="757.86" y="51.90" width="1.68" height="0.8" fill="#d4d4d4" opacity="0.8"/><rect x="759.54" y="51.90" width="0.42" height="0.8" fill="#c0c0c0" opacity="0.8"/><rect x="760.38" y="51.90" width="2.52" height="0.8" fill="#d4d4d4" opacity="0.8"/><rect x="762.90" y="51.90" width="0.42" height="0.8" fill="#c0c0c0" opacity="0.8"/><rect x="757.86" y="52.76" width="3.36" height="0.8" fill="#d4d4d4" opacity="0.8"/><rect x="761.22" y="52.76" width="0.42" height="0.8" fill="#c0c0c0" opacity="0.8"/><rect x="762.06" y="52.76" width="1.68" height="0.8" fill="#569cd6" opacity="0.8"/><rect x="763.74" y="52.76" width="0.42" height="0.8" fill="#c0c0c0" opacity="0.8"/><rect x="757.86" y="53.62" width="2.52" height="0.8" fill="#d4d4d4" opacity="0.8"/><rect x="760.38" y="53.62" width="0.42" height="0.8" fill="#c0c0c0" opacity="0.8"/><rect x="761.22" y="53.62" width="1.68" height="0.8" fill="#569cd6" opacity="0.8"/><rect x="762.90" y="53.62" width="0.42" height="0.8" fill="#c0c0c0" opacity="0.8"/><rect x="757.86" y="54.48" width="3.78" height="0.8" fill="#d4d4d4" opacity="0.8"/><rect x="761.64" y="54.48" width="0.42" height="0.8" fill="#c0c0c0" opacity="0.8"/><rect x="762.48" y="54.48" width="1.68" height="0.8" fill="#569cd6" opacity="0.8"/><rect x="764.16" y="54.48" width="0.42" height="0.8" fill="#c0c0c0" opacity="0.8"/><rect x="757.86" y="55.34" width="1.68" height="0.8" fill="#d4d4d4" opacity="0.8"/><rect x="759.54" y="55.34" width="0.42" height="0.8" fill="#c0c0c0" opacity="0.8"/><rect x="760.38" y="55.34" width="1.68" height="0.8" fill="#569cd6" opacity="0.8"/><rect x="762.06" y="55.34" width="0.42" height="0.8" fill="#c0c0c0" opacity="0.8"/><rect x="757.86" y="56.20" width="2.10" height="0.8" fill="#d4d4d4" opacity="0.8"/><rect x="759.96" y="56.20" width="0.42" height="0.8" fill="#c0c0c0" opacity="0.8"/><rect x="760.80" y="56.20" width="1.68" height="0.8" fill="#569cd6" opacity="0.8"/><rect x="756.18" y="57.06" width="0.84" height="0.8" fill="#c0c0c0" opacity="0.8"/><rect x="756.18" y="57.92" width="2.10" height="0.8" fill="#d4d4d4" opacity="0.8"/><rect x="758.28" y="57.92" width="0.42" height="0.8" fill="#c0c0c0" opacity="0.8"/><rect x="759.12" y="57.92" width="0.42" height="0.8" fill="#c0c0c0" opacity="0.8"/><rect x="757.86" y="58.78" width="1.68" height="0.8" fill="#d4d4d4" opacity="0.8"/><rect x="759.54" y="58.78" width="0.42" height="0.8" fill="#c0c0c0" opacity="0.8"/><rect x="760.38" y="58.78" width="2.52" height="0.8" fill="#d4d4d4" opacity="0.8"/><rect x="762.90" y="58.78" width="0.42" height="0.8" fill="#c0c0c0" opacity="0.8"/><rect x="757.86" y="59.64" width="3.36" height="0.8" fill="#d4d4d4" opacity="0.8"/><rect x="761.22" y="59.64" width="0.42" height="0.8" fill="#c0c0c0" opacity="0.8"/><rect x="762.06" y="59.64" width="1.68" height="0.8" fill="#569cd6" opacity="0.8"/><rect x="763.74" y="59.64" width="0.42" height="0.8" fill="#c0c0c0" opacity="0.8"/><rect x="757.86" y="60.50" width="2.52" height="0.8" fill="#d4d4d4" opacity="0.8"/><rect x="760.38" y="60.50" width="0.42" height="0.8" fill="#c0c0c0" opacity="0.8"/><rect x="761.22" y="60.50" width="1.68" height="0.8" fill="#569cd6" opacity="0.8"/><rect x="762.90" y="60.50" width="0.42" height="0.8" fill="#c0c0c0" opacity="0.8"/><rect x="757.86" y="61.36" width="3.36" height="0.8" fill="#d4d4d4" opacity="0.8"/><rect x="761.22" y="61.36" width="0.42" height="0.8" fill="#c0c0c0" opacity="0.8"/><rect x="762.06" y="61.36" width="1.68" height="0.8" fill="#569cd6" opacity="0.8"/><rect x="763.74" y="61.36" width="0.42" height="0.8" fill="#c0c0c0" opacity="0.8"/><rect x="757.86" y="62.22" width="1.68" height="0.8" fill="#d4d4d4" opacity="0.8"/><rect x="759.54" y="62.22" width="0.42" height="0.8" fill="#c0c0c0" opacity="0.8"/><rect x="760.38" y="62.22" width="1.68" height="0.8" fill="#569cd6" opacity="0.8"/><rect x="762.06" y="62.22" width="0.42" height="0.8" fill="#c0c0c0" opacity="0.8"/><rect x="756.18" y="63.08" width="0.84" height="0.8" fill="#c0c0c0" opacity="0.8"/><rect x="756.18" y="63.94" width="3.36" height="0.8" fill="#d4d4d4" opacity="0.8"/><rect x="759.54" y="63.94" width="0.42" height="0.8" fill="#c0c0c0" opacity="0.8"/><rect x="760.38" y="63.94" width="0.42" height="0.8" fill="#c0c0c0" opacity="0.8"/><rect x="757.86" y="64.80" width="1.68" height="0.8" fill="#d4d4d4" opacity="0.8"/><rect x="759.54" y="64.80" width="0.42" height="0.8" fill="#c0c0c0" opacity="0.8"/><rect x="760.38" y="64.80" width="2.52" height="0.8" fill="#d4d4d4" opacity="0.8"/><rect x="762.90" y="64.80" width="0.42" height="0.8" fill="#c0c0c0" opacity="0.8"/><rect x="757.86" y="65.66" width="3.36" height="0.8" fill="#d4d4d4" opacity="0.8"/><rect x="761.22" y="65.66" width="0.42" height="0.8" fill="#c0c0c0" opacity="0.8"/><rect x="762.06" y="65.66" width="1.68" height="0.8" fill="#569cd6" opacity="0.8"/><rect x="763.74" y="65.66" width="0.42" height="0.8" fill="#c0c0c0" opacity="0.8"/><rect x="757.86" y="66.52" width="1.68" height="0.8" fill="#d4d4d4" opacity="0.8"/><rect x="759.54" y="66.52" width="0.42" height="0.8" fill="#c0c0c0" opacity="0.8"/><rect x="760.38" y="66.52" width="1.68" height="0.8" fill="#569cd6" opacity="0.8"/><rect x="762.06" y="66.52" width="0.42" height="0.8" fill="#c0c0c0" opacity="0.8"/><rect x="757.86" y="67.38" width="2.10" height="0.8" fill="#d4d4d4" opacity="0.8"/><rect x="759.96" y="67.38" width="0.42" height="0.8" fill="#c0c0c0" opacity="0.8"/><rect x="760.80" y="67.38" width="1.68" height="0.8" fill="#569cd6" opacity="0.8"/><rect x="756.18" y="68.24" width="0.84" height="0.8" fill="#c0c0c0" opacity="0.8"/><rect x="756.18" y="69.10" width="2.52" height="0.8" fill="#d4d4d4" opacity="0.8"/><rect x="758.70" y="69.10" width="0.42" height="0.8" fill="#c0c0c0" opacity="0.8"/><rect x="759.54" y="69.10" width="0.42" height="0.8" fill="#c0c0c0" opacity="0.8"/><rect x="757.86" y="69.96" width="1.68" height="0.8" fill="#d4d4d4" opacity="0.8"/><rect x="759.54" y="69.96" width="0.42" height="0.8" fill="#c0c0c0" opacity="0.8"/><rect x="760.38" y="69.96" width="2.52" height="0.8" fill="#d4d4d4" opacity="0.8"/><rect x="762.90" y="69.96" width="0.42" height="0.8" fill="#c0c0c0" opacity="0.8"/><rect x="763.74" y="69.96" width="0.84" height="0.8" fill="#c0c0c0" opacity="0.8"/><rect x="765.00" y="69.96" width="4.20" height="0.8" fill="#d4d4d4" opacity="0.8"/><rect x="769.62" y="69.96" width="1.26" height="0.8" fill="#d4d4d4" opacity="0.8"/><rect x="757.86" y="70.82" width="3.36" height="0.8" fill="#d4d4d4" opacity="0.8"/><rect x="761.22" y="70.82" width="0.42" height="0.8" fill="#c0c0c0" opacity="0.8"/><rect x="762.06" y="70.82" width="1.68" height="0.8" fill="#569cd6" opacity="0.8"/><rect x="763.74" y="70.82" width="0.42" height="0.8" fill="#c0c0c0" opacity="0.8"/><rect x="756.18" y="71.68" width="0.84" height="0.8" fill="#c0c0c0" opacity="0.8"/><rect x="756.18" y="72.54" width="4.20" height="0.8" fill="#d4d4d4" opacity="0.8"/><rect x="760.38" y="72.54" width="0.42" height="0.8" fill="#c0c0c0" opacity="0.8"/><rect x="761.22" y="72.54" width="0.42" height="0.8" fill="#c0c0c0" opacity="0.8"/><rect x="757.86" y="73.40" width="1.68" height="0.8" fill="#d4d4d4" opacity="0.8"/><rect x="759.54" y="73.40" width="0.42" height="0.8" fill="#c0c0c0" opacity="0.8"/><rect x="760.38" y="73.40" width="2.52" height="0.8" fill="#d4d4d4" opacity="0.8"/><rect x="762.90" y="73.40" width="0.42" height="0.8" fill="#c0c0c0" opacity="0.8"/><rect x="756.18" y="74.26" width="0.84" height="0.8" fill="#c0c0c0" opacity="0.8"/><rect x="756.18" y="75.12" width="5.04" height="0.8" fill="#d4d4d4" opacity="0.8"/><rect x="761.22" y="75.12" width="0.42" height="0.8" fill="#c0c0c0" opacity="0.8"/><rect x="762.06" y="75.12" width="0.42" height="0.8" fill="#c0c0c0" opacity="0.8"/><rect x="757.86" y="75.98" width="0.42" height="0.8" fill="#c0c0c0" opacity="0.8"/><rect x="759.54" y="76.84" width="1.68" height="0.8" fill="#d4d4d4" opacity="0.8"/><rect x="761.22" y="76.84" width="0.42" height="0.8" fill="#c0c0c0" opacity="0.8"/><rect x="762.06" y="76.84" width="2.52" height="0.8" fill="#d4d4d4" opacity="0.8"/><rect x="764.58" y="76.84" width="0.42" height="0.8" fill="#c0c0c0" opacity="0.8"/><rect x="765.00" y="76.84" width="2.10" height="0.8" fill="#d4d4d4" opacity="0.8"/><rect x="767.10" y="76.84" width="0.42" height="0.8" fill="#c0c0c0" opacity="0.8"/><rect x="767.52" y="76.84" width="3.36" height="0.8" fill="#d4d4d4" opacity="0.8"/><rect x="770.88" y="76.84" width="0.42" height="0.8" fill="#c0c0c0" opacity="0.8"/><rect x="759.54" y="77.70" width="1.26" height="0.8" fill="#d4d4d4" opacity="0.8"/><rect x="760.80" y="77.70" width="0.42" height="0.8" fill="#c0c0c0" opacity="0.8"/><rect x="761.64" y="77.70" width="2.94" height="0.8" fill="#ce9178" opacity="0.8"/><rect x="757.86" y="78.56" width="0.42" height="0.8" fill="#c0c0c0" opacity="0.8"/><rect x="756.18" y="79.42" width="0.84" height="0.8" fill="#c0c0c0" opacity="0.8"/><rect x="756.18" y="80.28" width="3.36" height="0.8" fill="#d4d4d4" opacity="0.8"/><rect x="759.54" y="80.28" width="0.42" height="0.8" fill="#c0c0c0" opacity="0.8"/><rect x="760.38" y="80.28" width="0.42" height="0.8" fill="#c0c0c0" opacity="0.8"/><rect x="757.86" y="81.14" width="1.68" height="0.8" fill="#d4d4d4" opacity="0.8"/><rect x="759.54" y="81.14" width="0.42" height="0.8" fill="#c0c0c0" opacity="0.8"/><rect x="760.38" y="81.14" width="2.52" height="0.8" fill="#d4d4d4" opacity="0.8"/><rect x="762.90" y="81.14" width="0.42" height="0.8" fill="#c0c0c0" opacity="0.8"/><rect x="757.86" y="82.00" width="3.36" height="0.8" fill="#d4d4d4" opacity="0.8"/><rect x="761.22" y="82.00" width="0.42" height="0.8" fill="#c0c0c0" opacity="0.8"/><rect x="762.06" y="82.00" width="0.42" height="0.8" fill="#c0c0c0" opacity="0.8"/><rect x="762.48" y="82.00" width="1.68" height="0.8" fill="#569cd6" opacity="0.8"/><rect x="764.16" y="82.00" width="0.42" height="0.8" fill="#c0c0c0" opacity="0.8"/><rect x="765.00" y="82.00" width="9.24" height="0.8" fill="#ce9178" opacity="0.8"/><rect x="774.24" y="82.00" width="0.42" height="0.8" fill="#c0c0c0" opacity="0.8"/><rect x="756.18" y="82.86" width="0.84" height="0.8" fill="#c0c0c0" opacity="0.8"/><rect x="756.18" y="83.72" width="5.04" height="0.8" fill="#d4d4d4" opacity="0.8"/><rect x="761.22" y="83.72" width="0.42" height="0.8" fill="#c0c0c0" opacity="0.8"/><rect x="762.06" y="83.72" width="0.42" height="0.8" fill="#c0c0c0" opacity="0.8"/><rect x="757.86" y="84.58" width="1.68" height="0.8" fill="#d4d4d4" opacity="0.8"/><rect x="759.54" y="84.58" width="0.42" height="0.8" fill="#c0c0c0" opacity="0.8"/><rect x="760.38" y="84.58" width="2.52" height="0.8" fill="#d4d4d4" opacity="0.8"/><rect x="756.18" y="85.44" width="0.42" height="0.8" fill="#c0c0c0" opacity="0.8"/><rect x="754.50" y="86.30" width="0.84" height="0.8" fill="#c0c0c0" opacity="0.8"/><rect x="755.76" y="86.30" width="0.42" height="0.8" fill="#c0c0c0" opacity="0.8"/><rect x="756.18" y="86.30" width="4.20" height="0.8" fill="#d4d4d4" opacity="0.8"/><rect x="760.38" y="86.30" width="0.42" height="0.8" fill="#c0c0c0" opacity="0.8"/><rect x="761.22" y="86.30" width="1.68" height="0.8" fill="#569cd6" opacity="0.8"/><rect x="762.90" y="86.30" width="1.26" height="0.8" fill="#c0c0c0" opacity="0.8"/><rect x="754.50" y="87.16" width="4.20" height="0.8" fill="#d4d4d4" opacity="0.8"/><rect x="758.70" y="87.16" width="0.42" height="0.8" fill="#c0c0c0" opacity="0.8"/><rect x="759.12" y="87.16" width="1.26" height="0.8" fill="#d4d4d4" opacity="0.8"/><rect x="760.38" y="87.16" width="0.42" height="0.8" fill="#c0c0c0" opacity="0.8"/><rect x="760.80" y="87.16" width="2.52" height="0.8" fill="#ce9178" opacity="0.8"/><rect x="763.32" y="87.16" width="0.42" height="0.8" fill="#c0c0c0" opacity="0.8"/><rect x="764.16" y="87.16" width="2.10" height="0.8" fill="#569cd6" opacity="0.8"/><rect x="766.68" y="87.16" width="3.36" height="0.8" fill="#569cd6" opacity="0.8"/><rect x="770.04" y="87.16" width="0.42" height="0.8" fill="#c0c0c0" opacity="0.8"/><rect x="770.46" y="87.16" width="1.68" height="0.8" fill="#d4d4d4" opacity="0.8"/><rect x="772.14" y="87.16" width="0.42" height="0.8" fill="#c0c0c0" opacity="0.8"/><rect x="772.98" y="87.16" width="0.42" height="0.8" fill="#c0c0c0" opacity="0.8"/><rect x="756.18" y="88.02" width="0.84" height="0.8" fill="#569cd6" opacity="0.8"/><rect x="757.44" y="88.02" width="0.42" height="0.8" fill="#c0c0c0" opacity="0.8"/><rect x="757.86" y="88.02" width="1.68" height="0.8" fill="#569cd6" opacity="0.8"/><rect x="759.54" y="88.02" width="0.42" height="0.8" fill="#c0c0c0" opacity="0.8"/><rect x="759.96" y="88.02" width="4.20" height="0.8" fill="#d4d4d4" opacity="0.8"/><rect x="764.16" y="88.02" width="0.42" height="0.8" fill="#c0c0c0" opacity="0.8"/><rect x="764.58" y="88.02" width="4.20" height="0.8" fill="#ce9178" opacity="0.8"/><rect x="768.78" y="88.02" width="0.84" height="0.8" fill="#c0c0c0" opacity="0.8"/><rect x="770.04" y="88.02" width="1.68" height="0.8" fill="#569cd6" opacity="0.8"/><rect x="771.72" y="88.02" width="0.42" height="0.8" fill="#c0c0c0" opacity="0.8"/><rect x="772.14" y="88.02" width="3.36" height="0.8" fill="#d4d4d4" opacity="0.8"/><rect x="775.92" y="88.02" width="0.42" height="0.8" fill="#c0c0c0" opacity="0.8"/><rect x="776.76" y="88.02" width="2.10" height="0.8" fill="#569cd6" opacity="0.8"/><rect x="779.28" y="88.02" width="2.52" height="0.8" fill="#d4d4d4" opacity="0.8"/><rect x="781.80" y="88.02" width="0.42" height="0.8" fill="#c0c0c0" opacity="0.8"/><rect x="782.22" y="88.02" width="1.68" height="0.8" fill="#d4d4d4" opacity="0.8"/><rect x="783.90" y="88.02" width="0.42" height="0.8" fill="#c0c0c0" opacity="0.8"/><rect x="784.32" y="88.02" width="1.68" height="0.8" fill="#569cd6" opacity="0.8"/><rect x="786.00" y="88.02" width="0.42" height="0.8" fill="#c0c0c0" opacity="0.8"/><rect x="786.42" y="88.02" width="3.36" height="0.8" fill="#d4d4d4" opacity="0.8"/><rect x="789.78" y="88.02" width="0.42" height="0.8" fill="#c0c0c0" opacity="0.8"/><rect x="790.62" y="88.02" width="1.26" height="0.8" fill="#c0c0c0" opacity="0.8"/><rect x="756.18" y="88.88" width="1.68" height="0.8" fill="#d4d4d4" opacity="0.8"/><rect x="757.86" y="88.88" width="1.26" height="0.8" fill="#c0c0c0" opacity="0.8"/><rect x="754.50" y="89.74" width="1.26" height="0.8" fill="#c0c0c0" opacity="0.8"/><rect x="754.50" y="90.60" width="4.20" height="0.8" fill="#d4d4d4" opacity="0.8"/><rect x="758.70" y="90.60" width="0.42" height="0.8" fill="#c0c0c0" opacity="0.8"/><rect x="759.12" y="90.60" width="2.94" height="0.8" fill="#d4d4d4" opacity="0.8"/><rect x="762.06" y="90.60" width="0.42" height="0.8" fill="#c0c0c0" opacity="0.8"/><rect x="762.48" y="90.60" width="5.46" height="0.8" fill="#d4d4d4" opacity="0.8"/><rect x="767.94" y="90.60" width="0.42" height="0.8" fill="#c0c0c0" opacity="0.8"/><rect x="768.36" y="90.60" width="2.10" height="0.8" fill="#569cd6" opacity="0.8"/><rect x="770.88" y="90.60" width="3.36" height="0.8" fill="#569cd6" opacity="0.8"/><rect x="774.24" y="90.60" width="0.42" height="0.8" fill="#c0c0c0" opacity="0.8"/><rect x="774.66" y="90.60" width="5.46" height="0.8" fill="#d4d4d4" opacity="0.8"/><rect x="780.12" y="90.60" width="0.42" height="0.8" fill="#c0c0c0" opacity="0.8"/><rect x="780.96" y="90.60" width="0.42" height="0.8" fill="#c0c0c0" opacity="0.8"/><rect x="756.18" y="91.46" width="2.52" height="0.8" fill="#569cd6" opacity="0.8"/><rect x="759.12" y="91.46" width="2.10" height="0.8" fill="#569cd6" opacity="0.8"/><rect x="761.64" y="91.46" width="2.52" height="0.8" fill="#d4d4d4" opacity="0.8"/><rect x="764.16" y="91.46" width="0.42" height="0.8" fill="#c0c0c0" opacity="0.8"/><rect x="764.58" y="91.46" width="2.94" height="0.8" fill="#d4d4d4" opacity="0.8"/><rect x="767.52" y="91.46" width="0.42" height="0.8" fill="#c0c0c0" opacity="0.8"/><rect x="767.94" y="91.46" width="5.46" height="0.8" fill="#d4d4d4" opacity="0.8"/><rect x="773.40" y="91.46" width="0.42" height="0.8" fill="#c0c0c0" opacity="0.8"/><rect x="774.24" y="91.46" width="1.68" height="0.8" fill="#569cd6" opacity="0.8"/><rect x="775.92" y="91.46" width="0.42" height="0.8" fill="#c0c0c0" opacity="0.8"/><rect x="776.34" y="91.46" width="3.36" height="0.8" fill="#d4d4d4" opacity="0.8"/><rect x="779.70" y="91.46" width="0.84" height="0.8" fill="#c0c0c0" opacity="0.8"/><rect x="754.50" y="92.32" width="0.84" height="0.8" fill="#c0c0c0" opacity="0.8"/><rect x="754.50" y="93.18" width="4.20" height="0.8" fill="#d4d4d4" opacity="0.8"/><rect x="758.70" y="93.18" width="0.42" height="0.8" fill="#c0c0c0" opacity="0.8"/><rect x="759.12" y="93.18" width="2.94" height="0.8" fill="#d4d4d4" opacity="0.8"/><rect x="762.06" y="93.18" width="0.42" height="0.8" fill="#c0c0c0" opacity="0.8"/><rect x="762.48" y="93.18" width="7.98" height="0.8" fill="#d4d4d4" opacity="0.8"/><rect x="770.46" y="93.18" width="0.42" height="0.8" fill="#c0c0c0" opacity="0.8"/><rect x="770.88" y="93.18" width="3.36" height="0.8" fill="#569cd6" opacity="0.8"/><rect x="774.24" y="93.18" width="0.84" height="0.8" fill="#c0c0c0" opacity="0.8"/><rect x="775.50" y="93.18" width="0.42" height="0.8" fill="#c0c0c0" opacity="0.8"/><rect x="756.18" y="94.04" width="2.52" height="0.8" fill="#569cd6" opacity="0.8"/><rect x="759.12" y="94.04" width="1.26" height="0.8" fill="#d4d4d4" opacity="0.8"/><rect x="760.38" y="94.04" width="0.42" height="0.8" fill="#c0c0c0" opacity="0.8"/><rect x="760.80" y="94.04" width="1.68" height="0.8" fill="#d4d4d4" opacity="0.8"/><rect x="762.48" y="94.04" width="0.84" height="0.8" fill="#c0c0c0" opacity="0.8"/><rect x="757.86" y="94.90" width="1.26" height="0.8" fill="#d4d4d4" opacity="0.8"/><rect x="759.12" y="94.90" width="0.42" height="0.8" fill="#c0c0c0" opacity="0.8"/><rect x="759.96" y="94.90" width="1.68" height="0.8" fill="#569cd6" opacity="0.8"/><rect x="761.64" y="94.90" width="0.42" height="0.8" fill="#c0c0c0" opacity="0.8"/><rect x="762.06" y="94.90" width="1.26" height="0.8" fill="#d4d4d4" opacity="0.8"/><rect x="763.32" y="94.90" width="0.42" height="0.8" fill="#c0c0c0" opacity="0.8"/><rect x="757.86" y="95.76" width="3.36" height="0.8" fill="#d4d4d4" opacity="0.8"/><rect x="761.22" y="95.76" width="0.42" height="0.8" fill="#c0c0c0" opacity="0.8"/><rect x="762.06" y="95.76" width="1.68" height="0.8" fill="#569cd6" opacity="0.8"/><rect x="763.74" y="95.76" width="0.42" height="0.8" fill="#c0c0c0" opacity="0.8"/><rect x="764.16" y="95.76" width="3.36" height="0.8" fill="#d4d4d4" opacity="0.8"/><rect x="767.52" y="95.76" width="0.42" height="0.8" fill="#c0c0c0" opacity="0.8"/><rect x="757.86" y="96.62" width="2.10" height="0.8" fill="#d4d4d4" opacity="0.8"/><rect x="759.96" y="96.62" width="0.42" height="0.8" fill="#c0c0c0" opacity="0.8"/><rect x="760.80" y="96.62" width="1.68" height="0.8" fill="#569cd6" opacity="0.8"/><rect x="762.48" y="96.62" width="0.42" height="0.8" fill="#c0c0c0" opacity="0.8"/><rect x="762.90" y="96.62" width="2.10" height="0.8" fill="#d4d4d4" opacity="0.8"/><rect x="765.00" y="96.62" width="0.42" height="0.8" fill="#c0c0c0" opacity="0.8"/><rect x="757.86" y="97.48" width="3.36" height="0.8" fill="#d4d4d4" opacity="0.8"/><rect x="761.22" y="97.48" width="0.42" height="0.8" fill="#c0c0c0" opacity="0.8"/><rect x="762.06" y="97.48" width="1.68" height="0.8" fill="#569cd6" opacity="0.8"/><rect x="763.74" y="97.48" width="0.42" height="0.8" fill="#c0c0c0" opacity="0.8"/><rect x="764.16" y="97.48" width="3.36" height="0.8" fill="#d4d4d4" opacity="0.8"/><rect x="756.18" y="98.34" width="0.84" height="0.8" fill="#c0c0c0" opacity="0.8"/><rect x="757.44" y="98.34" width="2.94" height="0.8" fill="#d4d4d4" opacity="0.8"/><rect x="760.38" y="98.34" width="0.42" height="0.8" fill="#c0c0c0" opacity="0.8"/><rect x="760.80" y="98.34" width="1.26" height="0.8" fill="#d4d4d4" opacity="0.8"/><rect x="762.06" y="98.34" width="0.42" height="0.8" fill="#c0c0c0" opacity="0.8"/><rect x="762.48" y="98.34" width="7.98" height="0.8" fill="#d4d4d4" opacity="0.8"/><rect x="770.46" y="98.34" width="0.42" height="0.8" fill="#c0c0c0" opacity="0.8"/><rect x="771.30" y="98.34" width="0.42" height="0.8" fill="#c0c0c0" opacity="0.8"/><rect x="771.72" y="98.34" width="3.78" height="0.8" fill="#d4d4d4" opacity="0.8"/><rect x="775.50" y="98.34" width="0.42" height="0.8" fill="#c0c0c0" opacity="0.8"/><rect x="776.34" y="98.34" width="2.94" height="0.8" fill="#d4d4d4" opacity="0.8"/><rect x="779.28" y="98.34" width="0.42" height="0.8" fill="#c0c0c0" opacity="0.8"/><rect x="779.70" y="98.34" width="1.26" height="0.8" fill="#d4d4d4" opacity="0.8"/><rect x="780.96" y="98.34" width="0.42" height="0.8" fill="#c0c0c0" opacity="0.8"/><rect x="781.38" y="98.34" width="7.98" height="0.8" fill="#d4d4d4" opacity="0.8"/><rect x="789.36" y="98.34" width="1.26" height="0.8" fill="#c0c0c0" opacity="0.8"/><rect x="754.50" y="99.20" width="0.84" height="0.8" fill="#c0c0c0" opacity="0.8"/></svg>
<div class="a" style="left:792.7px;top:218.8px;width:7.3px;height:103.5px;background:#434343;"></div>
<div class="a" style="left:794.5px;top:292.5px;width:3px;height:2.8px;background:#9a9a9a;"></div>
<div class="a" style="left:794.5px;top:310.3px;width:3px;height:2.8px;background:#9a9a9a;"></div>
<svg style="left:5.5px;top:419.6px;" width="9" height="8" viewBox="0 0 9 8"><path d="M2 2.3 L4.6 4.8 L2 7.3 M7.6 1 L5 3.5 L7.6 6" stroke="#fff" stroke-width="0.8" fill="none"/></svg>
<svg style="left:21px;top:419.5px;" width="7" height="9" viewBox="0 0 7 9"><circle cx="1.6" cy="1.4" r="1" stroke="#fff" stroke-width="0.7" fill="none"/><circle cx="1.6" cy="7.5" r="1" stroke="#fff" stroke-width="0.7" fill="none"/><circle cx="5" cy="2.8" r="1" stroke="#fff" stroke-width="0.7" fill="none"/><path d="M1.6 2.4 V6.5 M5 3.8 C5 5.2 1.6 5 1.6 6.5" stroke="#fff" stroke-width="0.7" fill="none"/></svg>
<div class="a t" style="left:29.7px;top:417.70px;height:12px;line-height:12px;font-size:6.2px;color:#ffffff;font-weight:normal;">main</div>
<div class="a t" style="left:43.2px;top:416.60px;height:12px;line-height:12px;font-size:4.5px;color:#ffffff;font-weight:normal;">*</div>
<svg style="left:49.3px;top:420.3px;" width="7" height="7" viewBox="0 0 7 7"><path d="M1 3.5 A2.6 2.6 0 0 1 5.6 1.8 M6 3.5 A2.6 2.6 0 0 1 1.4 5.2" stroke="#fff" stroke-width="0.75" fill="none"/><path d="M5.8 0.6 V2.2 H4.2 M1.2 6.4 V4.8 H2.8" stroke="#fff" stroke-width="0.7" fill="none"/></svg>
<svg style="left:64px;top:420.5px;" width="7" height="7" viewBox="0 0 7 7"><circle cx="3.3" cy="3.5" r="2.9" stroke="#fff" stroke-width="0.7" fill="none"/><path d="M2 2.2 L4.6 4.8 M4.6 2.2 L2 4.8" stroke="#fff" stroke-width="0.65"/></svg>
<div class="a t" style="left:72.6px;top:417.90px;height:12px;line-height:12px;font-size:6.3px;color:#ffffff;font-weight:normal;">0</div>
<svg style="left:77.8px;top:420.3px;" width="8" height="7" viewBox="0 0 8 7"><path d="M3.5 0.6 L6.8 6.6 H0.3 Z" stroke="#fff" stroke-width="0.7" fill="none" stroke-linejoin="round"/><path d="M3.5 2.6 V4.5 M3.5 5.1 V5.8" stroke="#fff" stroke-width="0.65"/></svg>
<div class="a t" style="left:86.6px;top:417.90px;height:12px;line-height:12px;font-size:6.3px;color:#ffffff;font-weight:normal;">0</div>
<svg style="left:99px;top:420.3px;" width="8" height="7" viewBox="0 0 8 7"><circle cx="3.8" cy="2.2" r="1.2" stroke="#fff" stroke-width="0.7" fill="none"/><path d="M3.8 3.4 V6.6 M1 0.8 C0 2.6 0.8 4 1.8 4.6 M6.6 0.8 C7.6 2.6 6.8 4 5.8 4.6 M2.2 6.6 H5.4" stroke="#fff" stroke-width="0.7" fill="none"/></svg>
<div class="a t" style="left:108.5px;top:417.90px;height:12px;line-height:12px;font-size:6.3px;color:#ffffff;font-weight:normal;">0</div>
<div class="a t" style="left:578.6px;top:418.20px;height:12px;line-height:12px;font-size:6.0px;color:#ffffff;font-weight:normal;">Ln 57, Col 53</div>
<div class="a t" style="left:622.5px;top:418.20px;height:12px;line-height:12px;font-size:5.9px;color:#ffffff;font-weight:normal;">Spaces: 4</div>
<div class="a t" style="left:656.7px;top:418.20px;height:12px;line-height:12px;font-size:6.0px;color:#ffffff;font-weight:normal;">UTF-8</div>
<div class="a t" style="left:681.6px;top:418.20px;height:12px;line-height:12px;font-size:6.0px;color:#ffffff;font-weight:normal;">CRLF</div>
<div class="a t" style="left:703px;top:417.80px;height:12px;line-height:12px;font-size:6.8px;color:#ffffff;font-weight:normal;letter-spacing:-0.3px">{ }</div>
<div class="a t" style="left:712.5px;top:418.20px;height:12px;line-height:12px;font-size:5.9px;color:#ffffff;font-weight:normal;">JavaScript</div>
<svg style="left:748.5px;top:420.3px;" width="6" height="7" viewBox="0 0 6 7"><path d="M3 0.5 C5 0.5 5.6 2 5.5 3 C5.4 4.3 4.2 4.6 3.8 5.5 H2.2 C1.8 4.6 0.6 4.3 0.5 3 C0.4 2 1 0.5 3 0.5 Z" fill="#fff"/><path d="M2.2 6.3 H3.8" stroke="#fff" stroke-width="0.6"/></svg>
<div class="a t" style="left:756px;top:418.20px;height:12px;line-height:12px;font-size:6.05px;color:#ffffff;font-weight:normal;">Go Live</div>
<svg style="left:786px;top:420.2px;" width="6.5" height="7.5" viewBox="0 0 6.5 7.5"><path d="M3.25 0.6 C5 0.6 5.3 2 5.3 3.4 V5 L6 5.9 H0.5 L1.2 5 V3.4 C1.2 2 1.5 0.6 3.25 0.6 Z" stroke="#fff" stroke-width="0.7" fill="none"/><path d="M2.4 6.7 H4.1" stroke="#fff" stroke-width="0.7"/></svg>
<svg style="left:7.5px;top:435px;" width="9.2" height="9.6" viewBox="0 0 9.2 9.6"><path d="M0 1.3 L4 0.7 V4.5 H0 Z M4.6 0.6 L9.2 0 V4.5 H4.6 Z M0 5.1 H4 V8.9 L0 8.3 Z M4.6 5.1 H9.2 V9.6 L4.6 9 Z" fill="#ffffff"/></svg>
<div class="a" style="left:25.5px;top:429.5px;width:178.5px;height:20.5px;background:#2a2a2c;border-left:0.8px solid #3a3a3a"></div>
<svg style="left:31.5px;top:435px;" width="9" height="9" viewBox="0 0 9 9"><circle cx="5.3" cy="3.7" r="2.9" stroke="#ffffff" stroke-width="0.8" fill="none"/><path d="M3.2 5.8 L0.6 8.4" stroke="#ffffff" stroke-width="0.9"/></svg>
<div class="a t" style="left:46.5px;top:434.00px;height:12px;line-height:12px;font-size:7.6px;color:#d0d0d0;font-weight:normal;">Type here to search</div>
<svg style="left:212px;top:435px;" width="10" height="9" viewBox="0 0 10 9"><path d="M0 0.6 H6 M0 4.6 H6 M0 8.2 H6 M0.9 0.6 V8.2 M5.1 0.6 V8.2 M8.6 3 V8.2" stroke="#e8e8e8" stroke-width="0.8" fill="none"/><circle cx="8.6" cy="1.5" r="0.6" fill="#fff"/></svg>
<svg style="left:236px;top:434px;" width="13" height="11" viewBox="0 0 13 11"><path d="M0.5 1 H5 L6 2.2 H12.5 V10.5 H0.5 Z" fill="#f8d775"/><rect x="0.5" y="4" width="12" height="6.5" fill="#e8b43c"/><rect x="3.5" y="6" width="6" height="2.4" fill="#3fa9e0"/></svg>
<div class="a" style="left:234px;top:448.5px;width:20px;height:1.5px;background:#9ec8f0;"></div>
<svg style="left:262.5px;top:433.5px;" width="12.5" height="12.5" viewBox="0 0 12.5 12.5"><circle cx="6.25" cy="6.25" r="6" fill="#1a7fd4"/><path d="M1 7 C1 2 9 0 11.8 5 C12 8 9 9.5 6.8 8.6 C5 8 4.8 6.2 6.5 5.8 C3 5.3 1.8 8 3.2 10.5 C1.8 9.5 1 8.2 1 7 Z" fill="#36c46f"/></svg>
<div class="a" style="left:260px;top:448.5px;width:18px;height:1.5px;background:#9ec8f0;"></div>
<svg style="left:289px;top:433.5px;" width="12" height="13" viewBox="0 0 12 13"><path d="M2 1 L4 0 H8 L10 1 L11.5 3 L10.8 8 L6 12.5 L1.2 8 L0.5 3 Z" fill="#fb542b"/><path d="M3.5 4 L6 7.5 L8.5 4 M6 7.5 V10" stroke="#fff" stroke-width="1" fill="none"/></svg>
<div class="a" style="left:285px;top:448.5px;width:19px;height:1.5px;background:#9ec8f0;"></div>
<div class="a" style="left:308.5px;top:430px;width:25.5px;height:20px;background:#3d3d3d;"></div>
<svg style="left:314px;top:434px;" width="13.5" height="12" viewBox="0 0 13.5 12"><path d="M9.8 0.2 L13.4 1.8 V10.2 L9.8 11.8 L3.6 6.6 L1.4 8.3 L0.2 7.6 V4.4 L1.4 3.7 L3.6 5.4 Z M9.8 3.4 L6.2 6 L9.8 8.6 Z" fill="#2a9fe6"/><path d="M9.8 0.2 L13.4 1.8 V10.2 L9.8 11.8 Z" fill="#1b79c6"/></svg>
<div class="a" style="left:308.5px;top:448.5px;width:25.5px;height:1.5px;background:#9ec8f0;"></div>
<svg style="left:340px;top:433.5px;" width="12.5" height="12.5" viewBox="0 0 12.5 12.5"><circle cx="6.25" cy="6.25" r="6" fill="#db4437"/><path d="M6.25 6.25 L0.9 3.3 A6 6 0 0 0 6.25 12.25 Z" fill="#0f9d58"/><path d="M6.25 6.25 L6.25 12.25 A6 6 0 0 0 11.6 3.3 Z" fill="#f4c20d"/><circle cx="6.25" cy="6.25" r="2.8" fill="#fff"/><circle cx="6.25" cy="6.25" r="2.1" fill="#4285f4"/></svg>
<svg style="left:366.5px;top:434px;" width="11.5" height="11.5" viewBox="0 0 11.5 11.5"><defs><linearGradient id="np" x1="0" y1="0" x2="1" y2="1"><stop offset="0" stop-color="#e6f4f8"/><stop offset="1" stop-color="#8fc0cc"/></linearGradient></defs><path d="M3 0.5 L10.8 1.5 L9.5 10.8 L0.7 9.6 Z" fill="url(#np)"/></svg>
<svg style="left:392.5px;top:433.5px;" width="13" height="12.5" viewBox="0 0 13 12.5"><path d="M4.8 0.5 H8.2 L12 11 H1 Z" fill="#ff8800"/><path d="M3.4 4.5 H9.6 M2.4 8 H10.6" stroke="#ffffff" stroke-width="1.2"/><rect x="0.5" y="10.5" width="12" height="1.8" fill="#ff8800"/></svg>
<svg style="left:418.5px;top:434px;" width="11.5" height="11.5" viewBox="0 0 11.5 11.5"><path d="M0.5 0.5 H5 C2.5 2 2.5 9.5 5 11 H0.5 Z" fill="#6f9be0"/><path d="M2 0.8 C0.8 3 0.8 8.5 2 10.7" stroke="#e8f0ff" stroke-width="1" fill="none"/><circle cx="7" cy="5.75" r="4.3" fill="#e9dcc6"/><path d="M5.8 3.4 L9.2 5.75 L5.8 8.1 Z" fill="#1a1a1a"/><rect x="0.3" y="10.4" width="10" height="0.8" fill="#7fa8e8"/></svg>
<svg style="left:683.5px;top:437px;" width="8" height="5" viewBox="0 0 8 5"><path d="M0.6 4.4 L4 1 L7.4 4.4" stroke="#fff" stroke-width="0.8" fill="none"/></svg>
<svg style="left:697px;top:436px;" width="8" height="7.5" viewBox="0 0 8 7.5"><path d="M0.8 7 A6.2 6.2 0 0 1 7 0.8" stroke="#9a9a9a" stroke-width="0.7" fill="none" stroke-dasharray="1.2 0.6"/><path d="M2.5 7 A4.5 4.5 0 0 1 7 2.5" stroke="#c0c0c0" stroke-width="0.7" fill="none"/><path d="M4.2 7 A2.8 2.8 0 0 1 7 4.2" stroke="#e0e0e0" stroke-width="0.7" fill="none"/><circle cx="6.6" cy="6.6" r="0.7" fill="#fff"/></svg>
<svg style="left:708.5px;top:436px;" width="7" height="7" viewBox="0 0 7 7"><path d="M0.5 2.5 H2 L4 0.6 V6.4 L2 4.5 H0.5 Z" fill="none" stroke="#d0d0d0" stroke-width="0.7"/><path d="M6.2 1.2 V5.8" stroke="#d0d0d0" stroke-width="0.7" fill="none"/></svg>
<div class="a t" style="left:722px;top:434.00px;height:12px;line-height:12px;font-size:6.6px;color:#ffffff;font-weight:normal;transform:scaleX(0.82);transform-origin:0 50%">ENG</div>
<div class="a t" style="left:742.5px;top:430.90px;height:8px;line-height:8px;font-size:5.95px;color:#ffffff;font-weight:normal;">11:11 PM</div>
<div class="a t" style="left:740.7px;top:440.40px;height:8px;line-height:8px;font-size:6.45px;color:#ffffff;font-weight:normal;">8/28/2024</div>
<svg style="left:778.5px;top:435.5px;" width="9.5" height="8.5" viewBox="0 0 9.5 8.5"><path d="M0.5 0.5 H9 V6.3 H4 L2 8 V6.3 H0.5 Z" stroke="#fff" stroke-width="0.8" fill="none"/></svg>
</body></html>
